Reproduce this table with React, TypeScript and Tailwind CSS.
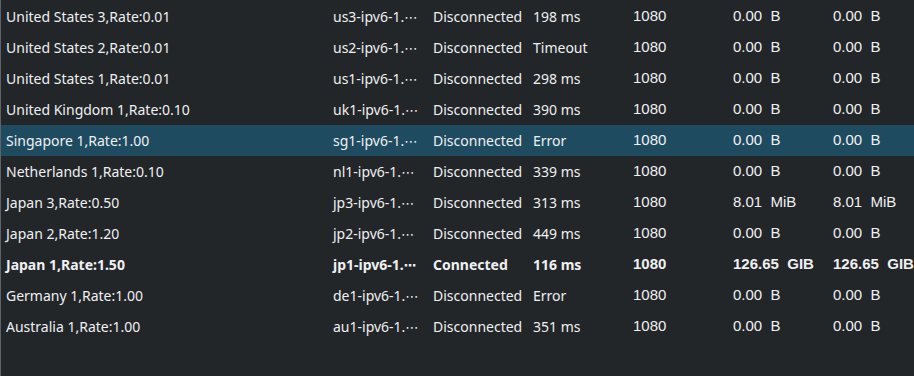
import React from "react";

type Row = {
  name: string;
  addr: string;
  status: string;
  latency: string;
  port: string;
  up: [string, string];
  down: [string, string];
  selected?: boolean;
  bold?: boolean;
};

const rows: Row[] = [
  { name: "United States 3,Rate:0.01", addr: "us3-ipv6-1.", status: "Disconnected", latency: "198 ms", port: "1080", up: ["0.00", "B"], down: ["0.00", "B"] },
  { name: "United States 2,Rate:0.01", addr: "us2-ipv6-1.", status: "Disconnected", latency: "Timeout", port: "1080", up: ["0.00", "B"], down: ["0.00", "B"] },
  { name: "United States 1,Rate:0.01", addr: "us1-ipv6-1.", status: "Disconnected", latency: "298 ms", port: "1080", up: ["0.00", "B"], down: ["0.00", "B"] },
  { name: "United Kingdom 1,Rate:0.10", addr: "uk1-ipv6-1.", status: "Disconnected", latency: "390 ms", port: "1080", up: ["0.00", "B"], down: ["0.00", "B"] },
  { name: "Singapore 1,Rate:1.00", addr: "sg1-ipv6-1.", status: "Disconnected", latency: "Error", port: "1080", up: ["0.00", "B"], down: ["0.00", "B"], selected: true },
  { name: "Netherlands 1,Rate:0.10", addr: "nl1-ipv6-1.", status: "Disconnected", latency: "339 ms", port: "1080", up: ["0.00", "B"], down: ["0.00", "B"] },
  { name: "Japan 3,Rate:0.50", addr: "jp3-ipv6-1.", status: "Disconnected", latency: "313 ms", port: "1080", up: ["8.01", "MiB"], down: ["8.01", "MiB"] },
  { name: "Japan 2,Rate:1.20", addr: "jp2-ipv6-1.", status: "Disconnected", latency: "449 ms", port: "1080", up: ["0.00", "B"], down: ["0.00", "B"] },
  { name: "Japan 1,Rate:1.50", addr: "jp1-ipv6-1.", status: "Connected", latency: "116 ms", port: "1080", up: ["126.65", "GIB"], down: ["126.65", "GIB"], bold: true },
  { name: "Germany 1,Rate:1.00", addr: "de1-ipv6-1.", status: "Disconnected", latency: "Error", port: "1080", up: ["0.00", "B"], down: ["0.00", "B"] },
  { name: "Australia 1,Rate:1.00", addr: "au1-ipv6-1.", status: "Disconnected", latency: "351 ms", port: "1080", up: ["0.00", "B"], down: ["0.00", "B"] },
];

const noto = "font-['Noto_Sans',sans-serif]";
const num = "font-['Liberation_Sans',Arial,sans-serif] text-[15px]";

export default function App() {
  return (
    <div className="w-[914px] h-[376px] overflow-hidden bg-[#232629] border-l border-[#606366] text-[#eff0f1] text-[14px]">
      <div className="flex flex-col pt-px">
        {rows.map((r) => (
          <div
            key={r.name}
            className={
              "flex h-[31px] items-center whitespace-nowrap " +
              (r.selected ? "bg-[#1f4b61] " : "") +
              (r.bold ? "font-bold " : "")
            }
          >
            <div className={"w-[327px] shrink-0 pl-[5px] " + noto}>{r.name}</div>
            <div className={"w-[100px] shrink-0 pl-[5px] " + noto}>
              {r.addr}
              <span className="font-['DejaVu_Sans',sans-serif] text-[13px]">⋯</span>
            </div>
            <div className={"w-[100px] shrink-0 pl-[5px] " + noto}>{r.status}</div>
            <div className={"w-[100px] shrink-0 pl-[5px] " + noto}>{r.latency}</div>
            <div className={"w-[100px] shrink-0 pl-[5px] " + num}>{r.port}</div>
            <div className={"w-[100px] shrink-0 pl-[5px] whitespace-pre " + num}>
              {r.up[0] + "  " + r.up[1]}
            </div>
            <div className={"w-[100px] shrink-0 pl-[5px] whitespace-pre " + num}>
              {r.down[0] + "  " + r.down[1]}
            </div>
          </div>
        ))}
      </div>
    </div>
  );
}
